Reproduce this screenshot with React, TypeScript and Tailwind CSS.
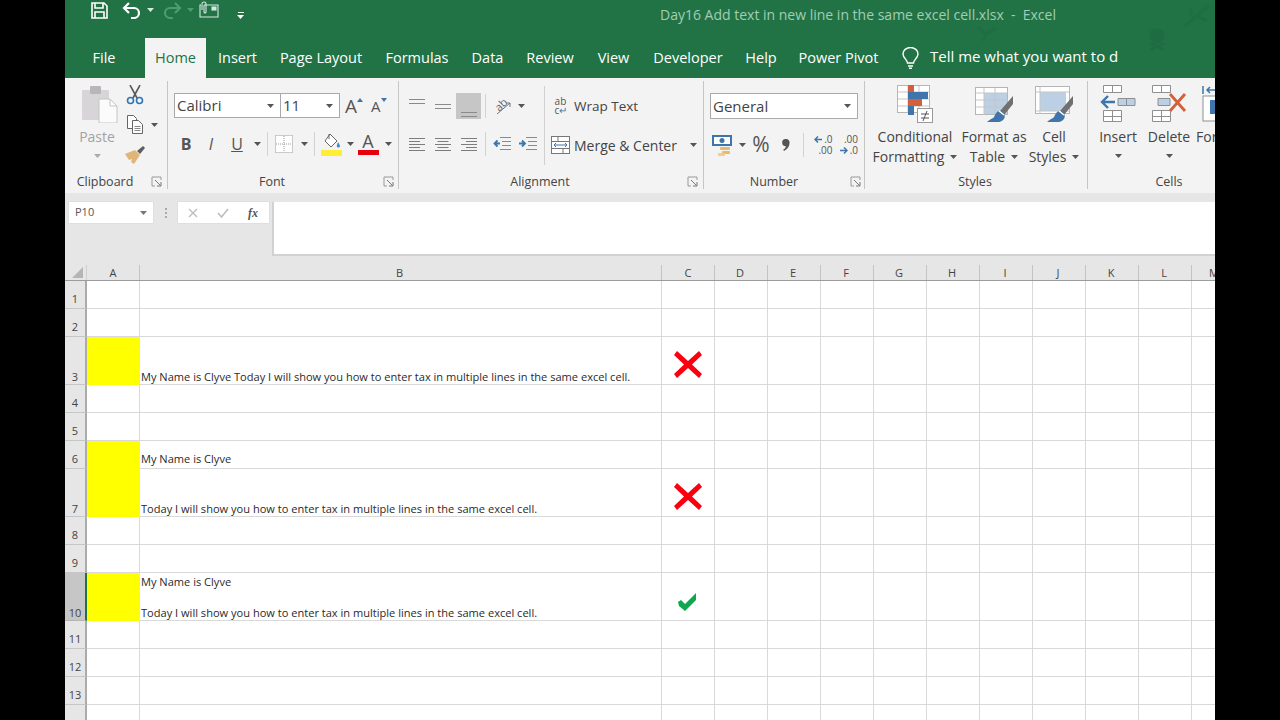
import type { ReactNode } from 'react';

const tabs = [
  { label: 'Insert', w: 'w-[61px]' },
  { label: 'Page Layout', w: 'w-[106px]' },
  { label: 'Formulas', w: 'w-[86px]' },
  { label: 'Data', w: 'w-[55px]' },
  { label: 'Review', w: 'w-[70px]' },
  { label: 'View', w: 'w-[57px]' },
  { label: 'Developer', w: 'w-[92px]' },
  { label: 'Help', w: 'w-[54px]' },
  { label: 'Power Pivot', w: 'w-[101px]' },
];

const longText = 'Today I will show you how to enter tax in multiple lines in the same excel cell.';

const rows = [
  { n: 1, h: 'h-[28px]' },
  { n: 2, h: 'h-[28px]' },
  { n: 3, h: 'h-[48px]', tall: true, yellow: 'bg-[#ffff00] border-[#ffff00]', text: 'My Name is Clyve ' + longText, mark: 'x' },
  { n: 4, h: 'h-[28px]' },
  { n: 5, h: 'h-[28px]' },
  { n: 6, h: 'h-[28px]', yellow: 'bg-[#ffff00] border-[#ffff00]', text: 'My Name is Clyve' },
  { n: 7, h: 'h-[48px]', tall: true, yellow: 'bg-[#ffff00] border-[#ffff00]', text: longText, mark: 'x' },
  { n: 8, h: 'h-[28px]' },
  { n: 9, h: 'h-[28px]' },
  { n: 10, h: 'h-[48px]', tall: true, yellow: 'bg-[#ffff00] border-[#ffff00]', wrapped: true, mark: 'check', active: true },
  { n: 11, h: 'h-[28px]' },
  { n: 12, h: 'h-[28px]' },
  { n: 13, h: 'h-[28px]' },
  { n: 14, h: 'h-[28px]', hideNumber: true },
];

const plainCols = ['D', 'E', 'F', 'G', 'H', 'I', 'J', 'K', 'L'];

function Caret({ color = '#555' }: { color?: string }) {
  return (
    <svg width="7" height="4" viewBox="0 0 7 4">
      <path d="M0 0h7L3.5 4z" fill={color} />
    </svg>
  );
}

function Slot({ w, children }: { w: string; children?: ReactNode }) {
  return <div className={`${w} flex shrink-0 items-center justify-center`}>{children}</div>;
}

function Launcher() {
  return (
    <svg width="11" height="11" viewBox="0 0 11 11" fill="none" stroke="#777">
      <path d="M10 4V1H1v9h3" stroke="#999" />
      <path d="M4 4l5.5 5.5M10 6v4H6" />
    </svg>
  );
}

function Lines({ ys }: { ys: number[] }) {
  return (
    <svg width="20" height="20" viewBox="0 0 20 20" stroke="#8a8a8a">
      {ys.map((y) => (
        <path key={y} d={`M2 ${y + 0.5}H18`} />
      ))}
    </svg>
  );
}

function AlignLines({ mode }: { mode: 'l' | 'c' | 'r' }) {
  const long = 'M1 3.5h16M1 9.5h16M1 15.5h16';
  const short = mode === 'l' ? 'M1 6.5h11M1 12.5h11' : mode === 'c' ? 'M3.5 6.5h11M3.5 12.5h11' : 'M6 6.5h11M6 12.5h11';
  return (
    <svg width="18" height="18" viewBox="0 0 18 18" stroke="#7d7d7d">
      <path d={long} />
      <path d={short} />
    </svg>
  );
}

function Indent({ right }: { right?: boolean }) {
  return (
    <svg width="20" height="18" viewBox="0 0 20 18" fill="none">
      <path d="M8 2.5h11M10 6.5h9M10 10.5h9M8 14.5h11" stroke="#8a8a8a" />
      {right ? (
        <path d="M1 8.5h5M4 5.5l3 3-3 3" stroke="#3f75ab" strokeWidth="1.8" />
      ) : (
        <path d="M8 8.5H3M5.5 5.5l-3 3 3 3" stroke="#3f75ab" strokeWidth="1.8" />
      )}
    </svg>
  );
}

function PasteIcon() {
  return (
    <svg width="36" height="37" viewBox="0 0 36 37">
      <rect x="0" y="4" width="27" height="30" rx="1" fill="#d8d5d8" />
      <rect x="8" y="0" width="11" height="8" rx="1" fill="#b9b6b9" />
      <path d="M17 13h11l7 7v17H17z" fill="#fbfbfb" stroke="#c4c4c4" />
      <path d="M28 13v7h7" fill="none" stroke="#c4c4c4" />
    </svg>
  );
}

function ScissorsIcon() {
  return (
    <svg width="18" height="20" viewBox="0 0 18 20" fill="none">
      <path d="M4 0l7 13M14 0L7 13" stroke="#5a5a5a" strokeWidth="1.6" />
      <circle cx="4.5" cy="15.5" r="3" stroke="#2f74b5" strokeWidth="1.6" />
      <circle cx="13.5" cy="15.5" r="3" stroke="#2f74b5" strokeWidth="1.6" />
    </svg>
  );
}

function CopyIcon() {
  return (
    <svg width="18" height="19" viewBox="0 0 18 19" fill="#fff" stroke="#666">
      <path d="M1.5.5h6l3 3v10h-9z" />
      <path d="M6.5 5.5h6l4 4v9h-10z" />
      <path d="M8.5 11.5h6M8.5 13.5h6M8.5 15.5h6" stroke="#888" />
    </svg>
  );
}

function BrushIcon() {
  return (
    <svg width="20" height="18" viewBox="0 0 20 18">
      <path d="M12 5l6-5 2 2-5 6z" fill="#5e5e5e" />
      <path d="M0 8l10-4 5 5-6 9-3-2 1-3-3 1z" fill="#e0b678" />
    </svg>
  );
}

function BordersIcon() {
  return (
    <svg width="18" height="18" viewBox="0 0 18 18" stroke="#9a9a9a" fill="#fff" strokeDasharray="1 1">
      <rect x="0.5" y="0.5" width="17" height="17" />
      <path d="M9 1v16M1 9h16" />
    </svg>
  );
}

function FillIcon() {
  return (
    <svg width="21" height="23" viewBox="0 0 21 23">
      <path d="M9 1l7 7-6 6-6-6z" fill="#fff" stroke="#666" />
      <path d="M8 1v5" stroke="#666" />
      <path d="M17 9c1 2 2 3 2 4a1.6 1.6 0 0 1-3.2 0c0-1 .6-2 1.2-4z" fill="#3a8fd0" />
      <rect x="0" y="17" width="21" height="6" fill="#ffee33" />
    </svg>
  );
}

function FontColorIcon() {
  return (
    <div className="flex flex-col items-center">
      <span className="text-[18px] leading-[17px] text-[#555]">A</span>
      <div className="h-[5px] w-[21px] bg-[#e8000f]" />
    </div>
  );
}

function OrientIcon() {
  return (
    <svg width="20" height="20" viewBox="0 0 20 20" fill="none">
      <text x="2" y="12" transform="rotate(-45 9 9)" fontSize="11" fill="#666" fontFamily="Open Sans, sans-serif">ab</text>
      <path d="M4 18L17 7M17 7h-4M17 7v4" stroke="#777" />
    </svg>
  );
}

function MergeIcon() {
  return (
    <svg width="20" height="20" viewBox="0 0 20 20" fill="#fff" stroke="#777">
      <rect x="0.5" y="1.5" width="18" height="17" />
      <path d="M0.500 6.500h18M0.500 13.500h18M7 1.500v5M12 13.500v5" />
      <path d="M3 10h13M5 8l-2 2 2 2M14 8l2 2-2 2" fill="none" stroke="#3f75ab" />
    </svg>
  );
}

function AccountingIcon() {
  return (
    <svg width="21" height="21" viewBox="0 0 21 21">
      <rect x="0" y="0" width="20" height="11" fill="#3f75ab" />
      <rect x="2" y="2" width="16" height="7" fill="#fff" />
      <circle cx="10" cy="5.500" r="2.500" fill="#3f75ab" />
      <rect x="8" y="12" width="10" height="3" rx="1" fill="#eab96f" />
      <rect x="10" y="16" width="8" height="3" rx="1" fill="#eab96f" />
      <rect x="6" y="18" width="7" height="3" rx="1" fill="#f0cc90" />
    </svg>
  );
}

function CommaIcon() {
  return (
    <svg width="8" height="12" viewBox="0 0 8 12">
      <path d="M3.500 0a3.500 3.500 0 0 1 4 4c0 3.500-2.500 6.500-5.500 8l-.8-1.200c1.500-1 2.500-2.300 2.800-3.600A3.500 3.500 0 0 1 3.500 0z" fill="#555" />
    </svg>
  );
}

function DecimalIcon({ more }: { more?: boolean }) {
  return (
    <div className="flex w-[24px] flex-col items-end text-[10px] leading-[11px] text-[#555]">
      <div className="flex items-center gap-[2px]">
        {more && <span>.00</span>}
        {!more && (
          <svg width="8" height="7" viewBox="0 0 8 7" fill="none" stroke="#3f75ab" strokeWidth="1.5">
            <path d="M8 3.500H1M4 .5l-3 3 3 3" />
          </svg>
        )}
        {!more && <span>.0</span>}
      </div>
      <div className="flex items-center gap-[2px]">
        {!more && <span>.00</span>}
        {more && (
          <svg width="8" height="7" viewBox="0 0 8 7" fill="none" stroke="#3f75ab" strokeWidth="1.5">
            <path d="M0 3.500h7M4 .5l3 3-3 3" />
          </svg>
        )}
        {more && <span>.0</span>}
      </div>
    </div>
  );
}

function CondIcon() {
  return (
    <svg width="36" height="38" viewBox="0 0 36 38">
      <rect x="0.500" y="0.500" width="32" height="27" fill="#fff" stroke="#b5b5b5" />
      <path d="M11 1v27M22 1v27M1 7h32M1 14h32M1 21h32" stroke="#c5c5c5" />
      <rect x="11" y="0" width="6" height="7" fill="#d2603a" />
      <rect x="11" y="7" width="20" height="7" fill="#3f75ab" />
      <rect x="11" y="14" width="14" height="7" fill="#d2603a" />
      <rect x="11" y="21" width="6" height="9" fill="#3f75ab" />
      <rect x="20.500" y="23.500" width="15" height="14" fill="#fff" stroke="#9a9a9a" />
      <path d="M24 29h8M24 33h8M30 26l-4 10" stroke="#555" />
    </svg>
  );
}

function TableStyleIcon() {
  return (
    <svg width="38" height="36" viewBox="0 0 38 36">
      <rect x="0.500" y="0.500" width="32" height="27" fill="#fff" stroke="#b5b5b5" />
      <rect x="9" y="6" width="23" height="21" fill="#bcd0e5" />
      <path d="M9 1v27M20 1v27M1 6h32M1 13h32M1 20h32" stroke="#c5c5c5" />
      <path d="M38 9l-13 15 4 4 9-11z" fill="#707070" />
      <path d="M24 24c-4 1-4 6-6 7-2 1-4 2-6 4h12c5-1 7-5 5-8z" fill="#3f75ab" />
      <path d="M24 24l5 4" stroke="#fff" strokeWidth="1.500" />
    </svg>
  );
}

function CellStyleIcon() {
  return (
    <svg width="38" height="37" viewBox="0 0 38 37">
      <rect x="0.500" y="0.500" width="34" height="27" fill="#fff" stroke="#b5b5b5" />
      <rect x="5" y="6" width="26" height="19" fill="#bcd0e5" />
      <path d="M5 1v27M1 6h33M1 25h33" stroke="#c5c5c5" />
      <path d="M38 10l-13 15 4 4 9-11z" fill="#707070" />
      <path d="M24 25c-4 1-4 6-6 7-2 1-4 2-6 4h12c5-1 7-5 5-8z" fill="#3f75ab" />
      <path d="M24 25l5 4" stroke="#fff" strokeWidth="1.500" />
    </svg>
  );
}

function InsertCellsIcon() {
  return (
    <svg width="36" height="37" viewBox="0 0 36 37" fill="#fff" stroke="#8f8f8f">
      <path d="M3.500.5h18v7h-18zM12.500.5v7M3.500 25.500h18v11h-18zM3.500 31.500h18M12.500 25.500v11" />
      <path d="M18 13.500h17v7H18z" fill="#bcd0e5" />
      <path d="M26.500 13.500v7" />
      <path d="M15 17H2M8 11l-6 6 6 6" fill="none" stroke="#3f75ab" strokeWidth="2.400" />
    </svg>
  );
}

function DeleteCellsIcon() {
  return (
    <svg width="36" height="37" viewBox="0 0 36 37" fill="#fff" stroke="#8f8f8f">
      <path d="M1.500.5h18v7h-18zM10.500.5v7M1.500 25.500h18v11h-18zM1.500 31.500h18M10.500 25.500v11" />
      <path d="M7 13.500h12v7H7z" fill="#bcd0e5" />
      <path d="M19 9l15 17M34 9L19 26" fill="none" stroke="#d2603a" strokeWidth="2.800" />
    </svg>
  );
}

function FormatCellsIcon() {
  return (
    <svg width="26" height="37" viewBox="0 0 26 37" fill="#fff" stroke="#8f8f8f">
      <path d="M1 1v8M13 5H5M8 2L5 5l3 3" fill="none" stroke="#3f75ab" strokeWidth="1.500" />
      <rect x="1" y="11" width="24" height="25" />
      <rect x="8" y="15" width="17" height="14" fill="#3f75ab" stroke="none" />
    </svg>
  );
}

function Group({ w, labelClass, label, launcher, children }: {
  w: string;
  labelClass: string;
  label: string;
  launcher?: ReactNode;
  children: ReactNode;
}) {
  return (
    <div className={`${w} flex h-[108px] shrink-0 flex-col overflow-hidden border-r border-[#c6c6c6]`}>
      <div className="h-[93px]">{children}</div>
      <div className="flex h-[15px] items-center text-[12.5px] leading-[15px] text-[#444]">
        <span className={`${labelClass} text-center whitespace-nowrap`}>{label}</span>
        {launcher}
      </div>
    </div>
  );
}

function BigButton({ w, icon, lines, caret }: { w: string; icon: ReactNode; lines: string[]; caret?: boolean }) {
  return (
    <div className={`${w} flex shrink-0 flex-col items-center whitespace-nowrap text-[14px] leading-[20px] text-[#444]`}>
      <div className="flex h-[42px] items-end">{icon}</div>
      <div className="mt-[4px]">{lines[0]}</div>
      <div className="flex items-center gap-[6px]">
        {lines[1]}
        {caret && <Caret />}
      </div>
    </div>
  );
}

function Ribbon() {
  return (
    <div className="flex h-[115px] items-start bg-[#f3f3f3] pt-[3px]">
      <Group
        w="w-[103px]"
        label="Clipboard"
        labelClass="ml-[10px] w-[60px] mr-[16px]"
        launcher={<Launcher />}
      >
        <div className="flex">
          <div className="ml-[15px] flex w-[34px] flex-col items-center">
            <div className="mt-[5px] ml-[2px] self-start"><PasteIcon /></div>
            <span className="mt-[4px] text-[14px] leading-[20px] text-[#a3a3a3]">Paste</span>
            <div className="mt-[7px]"><Caret color="#aaa" /></div>
          </div>
          <div className="ml-[11px] flex flex-col">
            <div className="mt-[4px] ml-[1px]"><ScissorsIcon /></div>
            <div className="mt-[10px] ml-[1px] flex items-center gap-[7px]"><CopyIcon /><Caret /></div>
            <div className="mt-[12px]"><BrushIcon /></div>
          </div>
        </div>
      </Group>

      <Group
        w="w-[231px]"
        label="Font"
        labelClass="ml-[84px] w-[40px] mr-[91px]"
        launcher={<Launcher />}
      >
        <div className="mt-[12px] ml-[6px] flex h-[25px] items-center">
          <div className="flex h-[25px] w-[107px] items-center justify-between border border-[#a9a9a9] bg-white pr-[6px] pl-[2px] text-[15px] text-[#444]">
            Calibri <Caret />
          </div>
          <div className="-ml-px flex h-[25px] w-[60px] items-center justify-between border border-[#a9a9a9] bg-white pr-[6px] pl-[2px] text-[15px] text-[#444]">
            11 <Caret />
          </div>
          <div className="ml-[5px] flex w-[26px] items-start text-[19px] leading-[20px] text-[#555]">
            A
            <svg className="mt-[2px]" width="6" height="4" viewBox="0 0 6 4"><path d="M0 4h6L3 0z" fill="#3f75ab" /></svg>
          </div>
          <div className="flex w-[26px] items-start text-[15px] leading-[20px] text-[#555]">
            A
            <svg className="mt-[2px]" width="6" height="4" viewBox="0 0 6 4"><path d="M0 0h6L3 4z" fill="#3f75ab" /></svg>
          </div>
        </div>
        <div className="mt-[12px] ml-[6px] flex h-[28px] items-center text-[#555]">
          <Slot w="w-[24px]"><span className="text-[16px] font-bold">B</span></Slot>
          <Slot w="w-[26px]"><span className="text-[16px] italic">I</span></Slot>
          <Slot w="w-[26px]"><span className="text-[16px] underline">U</span></Slot>
          <Slot w="w-[14px]"><Caret /></Slot>
          <Slot w="w-[6px]"><div className="h-[24px] w-px bg-[#d2d2d2]" /></Slot>
          <Slot w="w-[28px]"><BordersIcon /></Slot>
          <Slot w="w-[12px]"><Caret /></Slot>
          <Slot w="w-[8px]"><div className="h-[24px] w-px bg-[#d2d2d2]" /></Slot>
          <Slot w="w-[26px]"><FillIcon /></Slot>
          <Slot w="w-[12px]"><Caret /></Slot>
          <Slot w="w-[24px]"><FontColorIcon /></Slot>
          <Slot w="w-[16px]"><Caret /></Slot>
        </div>
      </Group>

      <Group
        w="w-[305px]"
        label="Alignment"
        labelClass="ml-[106px] w-[70px] mr-[112px]"
        launcher={<Launcher />}
      >
        <div className="flex">
          <div className="mt-[5px] ml-[5px] flex h-[79px] w-[141px] shrink-0 flex-col border-r border-[#d0d0d0] pt-[7px]">
            <div className="flex h-[26px] items-center">
              <Slot w="w-[26px]"><Lines ys={[3, 7]} /></Slot>
              <Slot w="w-[26px]"><Lines ys={[8, 12]} /></Slot>
              <Slot w="w-[25px]">
                <div className="flex h-[26px] w-[25px] items-end justify-center bg-[#c6c6c6]"><Lines ys={[13, 17]} /></div>
              </Slot>
              <Slot w="w-[9px]"><div className="h-[24px] w-px bg-[#d2d2d2]" /></Slot>
              <Slot w="w-[26px]"><OrientIcon /></Slot>
              <Slot w="w-[10px]"><Caret /></Slot>
            </div>
            <div className="mt-[11px] flex h-[28px] items-center">
              <Slot w="w-[26px]"><AlignLines mode="l" /></Slot>
              <Slot w="w-[26px]"><AlignLines mode="c" /></Slot>
              <Slot w="w-[26px]"><AlignLines mode="r" /></Slot>
              <Slot w="w-[7px]"><div className="h-[24px] w-px bg-[#d2d2d2]" /></Slot>
              <Slot w="w-[26px]"><Indent /></Slot>
              <Slot w="w-[26px]"><Indent right /></Slot>
            </div>
          </div>
          <div className="flex flex-col pt-[12px] pl-[6px] text-[14px] whitespace-nowrap text-[#444]">
            <div className="flex h-[26px] items-center gap-[3px]">
              <Slot w="w-[20px]">
                <span className="flex flex-col text-[10px] leading-[9px] text-[#555]">
                  <span>ab</span>
                  <span>c<span className="text-[#3f75ab]">↵</span></span>
                </span>
              </Slot>
              <span className="text-[13.5px]">Wrap Text</span>
            </div>
            <div className="mt-[12px] flex h-[28px] items-center gap-[3px]">
              <Slot w="w-[20px]"><MergeIcon /></Slot>
              <span className="w-[104px]">Merge &amp; Center</span>
              <Slot w="w-[24px]"><Caret /></Slot>
            </div>
          </div>
        </div>
      </Group>

      <Group
        w="w-[161px]"
        label="Number"
        labelClass="ml-[45px] w-[50px] mr-[51px]"
        launcher={<Launcher />}
      >
        <div className="mt-[12px] ml-[6px] flex h-[26px] w-[148px] items-center justify-between border border-[#a9a9a9] bg-white pr-[6px] pl-[2px] text-[15px] text-[#444]">
          General <Caret />
        </div>
        <div className="mt-[12px] ml-[4px] flex h-[28px] items-center text-[#555]">
          <Slot w="w-[28px]"><AccountingIcon /></Slot>
          <Slot w="w-[12px]"><Caret /></Slot>
          <Slot w="w-[26px]"><span className="text-[21px]">%</span></Slot>
          <Slot w="w-[24px]"><CommaIcon /></Slot>
          <Slot w="w-[10px]"><div className="h-[24px] w-px bg-[#d2d2d2]" /></Slot>
          <Slot w="w-[25px]"><DecimalIcon /></Slot>
          <Slot w="w-[26px]"><DecimalIcon more /></Slot>
        </div>
      </Group>

      <Group w="w-[223px]" label="Styles" labelClass="ml-[90px] w-[40px]">
        <div className="flex">
          <BigButton w="w-[100px]" icon={<CondIcon />} lines={['Conditional', 'Formatting']} caret />
          <BigButton w="w-[58px]" icon={<TableStyleIcon />} lines={['Format as', 'Table']} caret />
          <BigButton w="w-[62px]" icon={<CellStyleIcon />} lines={['Cell', 'Styles']} caret />
        </div>
      </Group>

      <div className="flex h-[108px] w-[127px] shrink-0 flex-col overflow-hidden">
        <div className="flex h-[93px]">
          <div className="ml-[1px] flex w-[58px] shrink-0 flex-col items-center text-[14px] leading-[20px] text-[#444]">
            <div className="flex h-[41px] items-end"><InsertCellsIcon /></div>
            <div className="mt-[5px]">Insert</div>
            <div className="mt-[7px]"><Caret /></div>
          </div>
          <div className="ml-[1px] flex w-[42px] shrink-0 flex-col items-center text-[14px] leading-[20px] text-[#444]">
            <div className="flex h-[41px] items-end"><DeleteCellsIcon /></div>
            <div className="mt-[5px]">Delete</div>
            <div className="mt-[7px]"><Caret /></div>
          </div>
          <div className="ml-[6px] flex shrink-0 flex-col text-[14px] leading-[20px] text-[#444]">
            <div className="ml-[6px] flex h-[41px] items-end"><FormatCellsIcon /></div>
            <div className="mt-[5px]">Format</div>
          </div>
        </div>
        <div className="flex h-[15px] items-center text-[12.5px] leading-[15px] text-[#444]">
          <span className="ml-[61px] w-[40px] text-center">Cells</span>
        </div>
      </div>
    </div>
  );
}

function FormulaBar() {
  return (
    <div className="flex h-[63px] items-start bg-[#e6e6e6]">
      <div className="ml-[4px] flex h-[21px] w-[84px] items-center justify-between bg-white px-[6px] text-[11px] text-[#555] shadow-[0_0_1px_#bbb]">
        P10 <Caret color="#777" />
      </div>
      <div className="ml-[12px] flex w-[2px] flex-col gap-[2px] pt-[6px]">
        <div className="h-[2px] w-[2px] bg-[#aaa]" />
        <div className="h-[2px] w-[2px] bg-[#aaa]" />
        <div className="h-[2px] w-[2px] bg-[#aaa]" />
      </div>
      <div className="ml-[11px] flex h-[21px] w-[91px] items-center bg-white shadow-[0_0_1px_#bbb]">
        <Slot w="w-[30px]">
          <svg width="10" height="10" viewBox="0 0 10 10" stroke="#bdbdbd" strokeWidth="1.400"><path d="M1 1l8 8M9 1L1 9" /></svg>
        </Slot>
        <Slot w="w-[30px]">
          <svg width="12" height="10" viewBox="0 0 12 10" fill="none" stroke="#bdbdbd" strokeWidth="1.600"><path d="M1 5l3.500 4L11 1" /></svg>
        </Slot>
        <Slot w="w-[30px]">
          <span className="font-['Liberation_Serif',serif] text-[12px] font-bold text-[#555] italic">fx</span>
        </Slot>
      </div>
      <div className="ml-[3px] h-[54px] flex-1 border-b-2 border-l-2 border-[#d2d2d2] bg-white" />
    </div>
  );
}

function ColumnHeader() {
  return (
    <div className="flex h-[16px] border-b border-[#9c9c9c] bg-[#e6e6e6] text-[11px] leading-[15px] text-[#444]">
      <div className="flex w-[22px] items-end justify-end border-r border-[#d0d0d0] pr-[3px] pb-[2px]">
        <svg width="11" height="11" viewBox="0 0 11 11"><path d="M11 0v11H0z" fill="#b5b5b5" /></svg>
      </div>
      <div className="w-[53px] border-r border-[#c4c4c4] text-center">A</div>
      <div className="w-[522px] border-r border-[#c4c4c4] pr-[2px] text-center">B</div>
      <div className="w-[53px] border-r border-[#c4c4c4] text-center">C</div>
      {plainCols.map((c) => (
        <div key={c} className="w-[53px] border-r border-[#c4c4c4] pr-[2px] text-center">{c}</div>
      ))}
      <div className="w-[23px] pl-[17px]">M</div>
    </div>
  );
}

function BadMark() {
  return (
    <svg className="mt-[8px]" width="28" height="27" viewBox="0 0 28 27">
      <path d="M3 0l11 10L25 0l3 4-10 9.500L28 23l-3 4-11-10L3 27l-3-4 10-9.500L0 4z" fill="#fa0010" />
    </svg>
  );
}

function GoodMark() {
  return (
    <svg className="mt-[10px] mr-[2px]" width="18" height="18" viewBox="0 0 18 18">
      <path d="M0 9l3-2 4 4L18 0v7L7 18 1 13z" fill="#0ea64f" />
    </svg>
  );
}

function Sheet() {
  return (
    <div className="flex-1 overflow-hidden bg-white text-[11.07px] text-[#2a2a2a]">
      {rows.map((r) => (
        <div key={r.n} className={`${r.h} flex`}>
          <div
            className={`flex w-[22px] shrink-0 items-end justify-center border-r-2 border-b text-[11px] text-[#444] ${
              r.tall ? 'leading-[15px]' : 'leading-[19px]'
            } ${r.active ? 'border-r-[#217346] border-b-[#b5b5b5] bg-[#c6c6c6]' : 'border-r-[#ababab] border-b-[#c6c6c6] bg-[#e6e6e6]'}`}
          >
            {!r.hideNumber && r.n}
          </div>
          <div className={`w-[53px] shrink-0 border-r border-b ${r.yellow ?? 'border-[#d9d9d9]'}`} />
          <div className="flex w-[522px] shrink-0 flex-col justify-end border-r border-b border-[#d9d9d9] pl-[1px] whitespace-nowrap">
            {r.text && <div className={r.tall ? 'leading-[14px]' : 'pb-[1px] leading-[16px]'}>{r.text}</div>}
            {r.wrapped && (
              <div className="flex h-full flex-col justify-between pt-px leading-[16px]">
                <div>My Name is Clyve</div>
                <div className="-mb-px">{longText}</div>
              </div>
            )}
          </div>
          <div className="flex w-[53px] shrink-0 items-center justify-center border-r border-b border-[#d9d9d9]">
            {r.mark === 'x' && <BadMark />}
            {r.mark === 'check' && <GoodMark />}
          </div>
          {plainCols.map((c) => (
            <div key={c} className="w-[53px] shrink-0 border-r border-b border-[#d9d9d9]" />
          ))}
          <div className="flex-1 border-b border-[#d9d9d9]" />
        </div>
      ))}
    </div>
  );
}

export default function App() {
  return (
    <div className="flex h-screen justify-center overflow-hidden bg-black font-['Open_Sans',sans-serif]">
      <div className="flex h-[720px] w-[1150px] flex-col overflow-hidden">
        <div className="relative h-[78px] shrink-0 bg-[#217346] text-white">
          {/* faint office theme doodles behind the title bar */}
          <svg className="absolute top-[26px] left-[1082px]" width="20" height="26" viewBox="0 0 24 30" fill="#1e6c42">
            <circle cx="12" cy="11" r="9" />
            <path d="M4 20l16 8M20 20L4 28" stroke="#1e6c42" strokeWidth="3" />
          </svg>
          <svg className="absolute top-[26px] left-[912px]" width="20" height="16" viewBox="0 0 20 16" fill="none" stroke="#1f6e43" strokeWidth="3">
            <path d="M1 1l8 7 10-6M9 8l-3 7" />
          </svg>
          <svg className="absolute top-[2px] left-[1118px]" width="30" height="26" viewBox="0 0 30 26" fill="none" stroke="#1f6e43" strokeWidth="3">
            <path d="M2 24L26 3M14 14l10 5M10 17L7 7" />
          </svg>
          <div className="relative flex h-[38px] items-start">
            <div className="mt-[2px] ml-[26px]">
              <svg width="17" height="17" viewBox="0 0 17 17" fill="none" stroke="#fff" strokeWidth="1.600">
                <path d="M1 1h12l3 3v12H1z" />
                <path d="M4 1v5h8V1M4 16v-6h9v6" />
              </svg>
            </div>
            <div className="mt-[2px] ml-[14px]">
              <svg width="19" height="17" viewBox="0 0 19 17" fill="none" stroke="#fff" strokeWidth="2.200">
                <path d="M7 1L2 6l5 5M2 6h10a5 5 0 0 1 0 10H9" />
              </svg>
            </div>
            <div className="mt-[8px] ml-[6px]"><Caret color="#d8e8de" /></div>
            <div className="mt-[2px] ml-[9px]">
              <svg width="19" height="17" viewBox="0 0 19 17" fill="none" stroke="#4f9a70" strokeWidth="2.200">
                <path d="M12 1l5 5-5 5M17 6H7a5 5 0 0 0 0 10h3" />
              </svg>
            </div>
            <div className="mt-[8px] ml-[5px]"><Caret color="#4f9a70" /></div>
            <div className="mt-[1px] ml-[5px]">
              <svg width="20" height="17" viewBox="0 0 20 17" fill="none" stroke="#d8e8de" strokeWidth="1.100">
                <path d="M5 4h14v12H1V4h1" />
                <path d="M3 9V3a2 2 0 0 1 4 0v8a1 1 0 0 1-2 0V4" />
                <rect x="13" y="6" width="4" height="3" fill="#d8e8de" />
              </svg>
            </div>
            <div className="mt-[12px] ml-[18px] flex flex-col items-center gap-[2px]">
              <div className="h-px w-[6px] bg-white" />
              <Caret color="#fff" />
            </div>
            <div className="mt-[5px] ml-[416px] text-[14px] leading-[20px] whitespace-nowrap text-[#a2cdb4]">
              Day16 Add text in new line in the same excel cell.xlsx&nbsp; -&nbsp; Excel
            </div>
          </div>
          <div className="relative flex h-[40px] items-end text-[14.5px] leading-[20px]">
            <div className="flex h-[40px] w-[78px] items-center justify-center pb-px">File</div>
            <div className="ml-[2px] flex h-[40px] w-[61px] items-center justify-center bg-[#f3f3f3] pb-px text-[#217346]">Home</div>
            <div className="w-px" />
            {tabs.map((t) => (
              <div key={t.label} className={`${t.w} flex h-[40px] shrink-0 items-center justify-center pb-px whitespace-nowrap`}>
                {t.label}
              </div>
            ))}
            <div className="flex h-[40px] items-center">
              <svg className="ml-[13px]" width="17" height="22" viewBox="0 0 17 22" fill="none" stroke="#fff" strokeWidth="1.400">
                <path d="M5.500 16c0-3-4.500-5-4.500-9a7.500 6.500 0 0 1 15 0c0 4-4.500 6-4.500 9z" />
                <path d="M6 19h5M7 21.300h3" />
              </svg>
              <span className="mb-[5px] ml-[11px] text-[15px] whitespace-nowrap">Tell me what you want to d</span>
            </div>
          </div>
        </div>
        <Ribbon />
        <div className="h-[9px] shrink-0 bg-[#e6e6e6]" />
        <FormulaBar />
        <ColumnHeader />
        <Sheet />
      </div>
    </div>
  );
}
